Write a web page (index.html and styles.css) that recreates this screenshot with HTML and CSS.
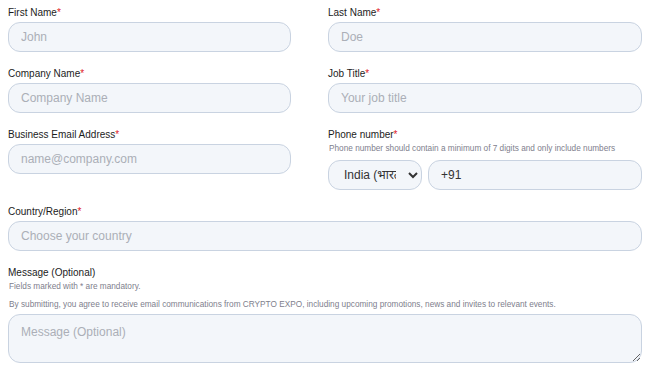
FILE: index.html
```html
<!DOCTYPE html>
<html lang="en">

<head>
    <meta charset="UTF-8">
    <meta name="viewport" content="width=device-width, initial-scale=1.0">
    <title>Contact Form</title>
    <link rel="stylesheet" href="styles.css">
</head>

<body>
    <form class="contact-form">
        <!-- Name row -->
        <div class="field">
            <label for="first-name">First Name<span class="req">*</span></label>
            <input type="text" id="first-name" placeholder="John">
        </div>
        <div class="field">
            <label for="last-name">Last Name<span class="req">*</span></label>
            <input type="text" id="last-name" placeholder="Doe">
        </div>

        <!-- Company row -->
        <div class="field">
            <label for="company">Company Name<span class="req">*</span></label>
            <input type="text" id="company" placeholder="Company Name">
        </div>
        <div class="field">
            <label for="job-title">Job Title<span class="req">*</span></label>
            <input type="text" id="job-title" placeholder="Your job title">
        </div>

        <!-- Contact row -->
        <div class="field">
            <label for="email">Business Email Address<span class="req">*</span></label>
            <input type="email" id="email" placeholder="name@company.com">
        </div>
        <div class="field">
            <label for="phone">Phone number<span class="req">*</span></label>
            <p class="hint">Phone number should contain a minimum of 7 digits and only include numbers</p>
            <div class="phone-group">
                <select id="phone-country">
                    <option>India (भारत)</option>
                </select>
                <input type="tel" id="phone" value="+91">
            </div>
        </div>

        <div class="field wide">
            <label for="country">Country/Region<span class="req">*</span></label>
            <input type="text" id="country" placeholder="Choose your country">
        </div>

        <div class="field wide message">
            <label for="message">Message (Optional)</label>
            <p class="hint">Fields marked with * are mandatory.</p>
            <p class="hint consent">By submitting, you agree to receive email communications from CRYPTO EXPO, including upcoming promotions, news and invites to relevant events.</p>
            <textarea id="message" placeholder="Message (Optional)"></textarea>
        </div>
    </form>
</body>

</html>
```

FILE: styles.css
```css
body {
    font-family: "Liberation Sans", Arial, "Noto Sans", sans-serif;
    background: #fff;
    margin: 0;
    padding: 7px 9px 0 8px;
}

.contact-form {
    display: grid;
    grid-template-columns: 283px 314px;
    column-gap: 37px;
    row-gap: 16px;
}

.field {
    display: flex;
    flex-direction: column;
}

.field.wide {
    grid-column: 1 / -1;
}

.field label {
    font-size: 10px;
    line-height: 11px;
    color: #1c1c1c;
    margin-bottom: 4px;
}

.req {
    color: #e0201f;
}

.hint {
    margin: 0 0 6px;
    font-size: 8.25px;
    line-height: 10px;
    color: #80808d;
    padding-left: 1px;
}

input,
select,
textarea {
    box-sizing: border-box;
    font-family: "Liberation Sans", Arial, "Noto Sans", sans-serif;
    font-size: 12px;
    color: #333;
    background: #f3f6fa;
    border: 1px solid #c9d3e1;
    border-radius: 12px;
    outline: none;
}

input {
    height: 30px;
    width: 100%;
    padding: 0 12px;
}

::placeholder {
    color: #abafb7;
}

.phone-group {
    display: flex;
    gap: 6px;
}

.phone-group select {
    width: 94px;
    height: 30px;
    flex-shrink: 0;
    padding: 0 9px 0 11px;
}

.phone-group input {
    flex: 1;
}

.message .hint {
    margin-bottom: 8px;
}

.message .consent {
    margin-bottom: 4px;
}

textarea {
    height: 49px;
    width: 100%;
    padding: 10px 12px;
    resize: vertical;
}
```
